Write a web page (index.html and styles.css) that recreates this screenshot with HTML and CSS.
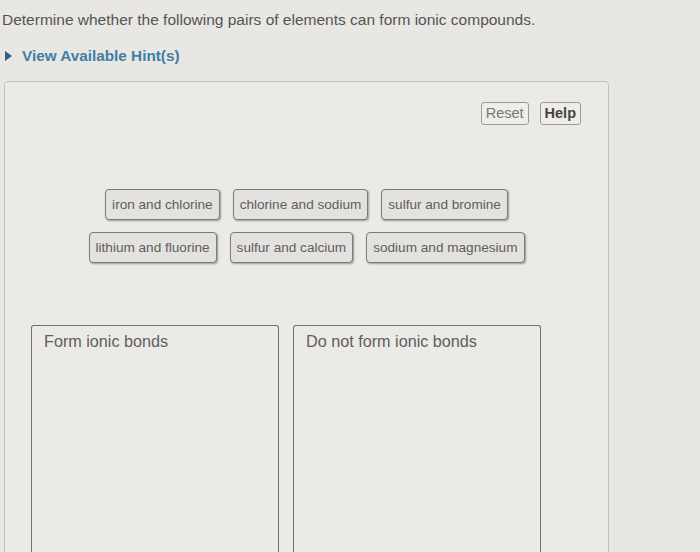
FILE: index.html
```html
<!DOCTYPE html>
<html>
<head>
<meta charset="utf-8">
<link rel="stylesheet" href="styles.css">
</head>
<body>
<p class="prompt">Determine whether the following pairs of elements can form ionic compounds.</p>
<div class="hint"><span class="tri"></span><span class="hint-text">View Available Hint(s)</span></div>
<div class="panel">
  <div class="toolbar">
    <span class="btn reset">Reset</span>
    <span class="btn help">Help</span>
  </div>
  <div class="chips">
    <div class="row">
      <span class="chip">iron and chlorine</span>
      <span class="chip">chlorine and sodium</span>
      <span class="chip">sulfur and bromine</span>
    </div>
    <div class="row">
      <span class="chip">lithium and fluorine</span>
      <span class="chip">sulfur and calcium</span>
      <span class="chip">sodium and magnesium</span>
    </div>
  </div>
  <div class="bins">
    <div class="bin"><div class="bin-label">Form ionic bonds</div></div>
    <div class="bin"><div class="bin-label">Do not form ionic bonds</div></div>
  </div>
</div>
</body>
</html>
```
FILE: styles.css
```css
html, body {
  margin: 0;
  padding: 0;
  background: #e8e7e3;
  font-family: "Liberation Sans", Arial, sans-serif;
  color: #5a5a5a;
  height: 552px;
  overflow: hidden;
}
.prompt {
  margin: 0;
  padding: 11px 0 0 2px;
  font-size: 15.5px;
  line-height: 18px;
  color: #555;
}
.hint {
  display: flex;
  align-items: center;
  margin-top: 18px;
  padding-left: 5px;
  height: 18px;
}
.tri {
  width: 0;
  height: 0;
  border-top: 5px solid transparent;
  border-bottom: 5px solid transparent;
  border-left: 7px solid #2d5f82;
}
.hint-text {
  margin-left: 10px;
  font-size: 15.3px;
  font-weight: bold;
  color: #3f7ea6;
}
.panel {
  margin: 16px 0 0 4px;
  width: 603px;
  height: 480px;
  border: 1px solid #c2c1bd;
  border-radius: 4px;
  background: #ebeae6;
}
.toolbar {
  display: flex;
  justify-content: flex-end;
  gap: 11px;
  padding: 20px 27px 0 0;
}
.btn {
  display: inline-block;
  height: 21px;
  line-height: 21px;
  padding: 0 4px;
  border: 1px solid #9a9a97;
  border-radius: 3px;
  font-size: 14.5px;
  background: #eeede9;
}
.reset { color: #777; }
.help { color: #444; font-weight: bold; }
.chips {
  margin-top: 64px;
  display: flex;
  flex-direction: column;
  gap: 12px;
}
.row {
  display: flex;
  justify-content: center;
  gap: 13px;
}
.chip {
  display: inline-block;
  height: 29px;
  line-height: 29px;
  padding: 0 6px;
  border: 1px solid #7a7a78;
  border-radius: 4px;
  box-shadow: 1px 1px 2px rgba(0,0,0,0.35);
  background: #e3e2de;
  font-size: 13.6px;
  color: #5e5e5e;
}
.bins {
  margin-top: 62px;
  padding-left: 26px;
  display: flex;
  gap: 14px;
}
.bin {
  width: 246px;
  height: 240px;
  border: 1.5px solid #707070;
  border-bottom: none;
  border-radius: 3px 3px 0 0;
  background: #ebeae6;
}
.bin-label {
  padding: 6px 0 0 12px;
  font-size: 16.2px;
  color: #5e5e5e;
}
```
